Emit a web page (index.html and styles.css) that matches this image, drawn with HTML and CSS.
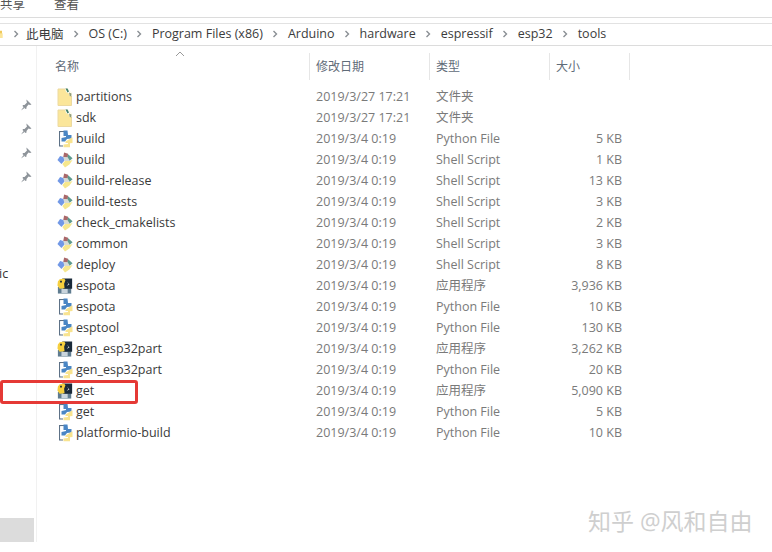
FILE: index.html
```html
<!DOCTYPE html>
<html lang="zh-CN">
<head>
<meta charset="utf-8">
<title>tools</title>
<link rel="stylesheet" href="styles.css">
</head>
<body>
<svg class="defs" width="0" height="0" aria-hidden="true">
  <symbol id="i-folder" viewBox="0 0 16 18">
    <path d="M1 1H10.500L14.500 5V17.500H1Z" fill="#fbe69a" stroke="#ecd9a0" stroke-width="1"/>
    <path d="M8 .5H11L15 4.500V8L12.500 8L12 5.500L9 4Z" fill="#fffdf2"/>
    <path d="M8.500 .5L10.500 .5L12 3.500L10.500 4.500Z" fill="#3f7f6a"/>
    <path d="M12 4.500L14.500 5.500L14.300 8.500L12.700 8Z" fill="#8f9c78"/>
  </symbol>
  <symbol id="i-py" viewBox="0 0 16 18">
    <path d="M2 1H9V2.200H3.200V15.300H6V16.500H2Z" fill="#5d7186"/>
    <path d="M3.200 2.200H9V15.300H3.200Z" fill="#fff"/>
    <path d="M6.500 .5H10.500L11 5H14.500V8.500L10 9L8 11.500L4.500 11.500V8L9 7V6H6.500Z" fill="#4a86c4"/>
    <path d="M15 7.500H15.500V13L13 13.300V17.200H6.500V14.500L11 14V13H8.500V11.500L11 10Z" fill="#f8e38f"/>
  </symbol>
  <symbol id="i-sh" viewBox="0 0 18 18">
    <path d="M8 .5L12.500 2L12 6.500L7 6Z" fill="#a9686a"/>
    <path d="M3.500 4.500L8 6L8.500 9.500L5 13.500L.5 9Z" fill="#7198e6"/>
    <path d="M12.500 2.500L17.500 7L14 10L11.500 6.500Z" fill="#5d9a8e"/>
    <path d="M9.500 9.500L14 10L17.500 9L14 14L9 17.500L6 13.500Z" fill="#f6e78e"/>
    <path d="M7 5.500L12 6L14.500 10L8.500 10Z" fill="#d5dad6"/>
  </symbol>
  <symbol id="i-exe" viewBox="0 0 18 18">
    <path d="M1 10H16V17.500H1Z" fill="#5f7c90"/>
    <path d="M5 12H12V17H5Z" fill="#c9d4dc"/>
    <path d="M6 .5H17V12H7Z" fill="#1a2a3a"/>
    <path d="M11 4L14 7L11 9L13 6.500Z" fill="#f0f0f0"/>
    <path d="M3 1.500L8 .5L9.500 2.500L8 6.500L8.500 11.500L3 12L.5 8.500L1 4Z" fill="#f6cf3e"/>
    <path d="M3.500 3H5.500V5H3.500Z" fill="#1a2a3a"/>
  </symbol>
  <symbol id="i-pin" viewBox="0 0 12 12">
    <path d="M6.500 .5L11.500 5.500L10 6L8.500 5.500L6.500 8L6.500 9.500L5.500 10L2.500 7L3 6L4.500 6L7 3.500L6.500 2Z" fill="#8e949a"/>
    <path d="M3.500 8L1 11.500L4.500 9Z" fill="#8e949a"/>
  </symbol>
  <symbol id="i-chev" viewBox="0 0 6 8">
    <path d="M1.500 1L4.500 4L1.500 7" fill="none" stroke="#8a8f94" stroke-width="1.400"/>
  </symbol>
</svg>

<header class="tabs">
  <span class="tab tab-share">共享</span>
  <span class="tab">查看</span>
</header>

<nav class="crumbs">
  <svg class="crumb-folder" viewBox="0 0 6 14"><path d="M0 2H3V12H0Z" fill="#f0c95a"/><path d="M0 6H4V13H0Z" fill="#fbe59a"/></svg>
  <svg class="chev"><use href="#i-chev"/></svg><span>此电脑</span>
  <svg class="chev"><use href="#i-chev"/></svg><span>OS (C:)</span>
  <svg class="chev"><use href="#i-chev"/></svg><span>Program Files (x86)</span>
  <svg class="chev"><use href="#i-chev"/></svg><span>Arduino</span>
  <svg class="chev"><use href="#i-chev"/></svg><span>hardware</span>
  <svg class="chev"><use href="#i-chev"/></svg><span>espressif</span>
  <svg class="chev"><use href="#i-chev"/></svg><span>esp32</span>
  <svg class="chev"><use href="#i-chev"/></svg><span>tools</span>
</nav>

<main class="main">
  <aside class="side">
    <div class="pins">
      <svg class="pin"><use href="#i-pin"/></svg>
      <svg class="pin"><use href="#i-pin"/></svg>
      <svg class="pin"><use href="#i-pin"/></svg>
      <svg class="pin"><use href="#i-pin"/></svg>
    </div>
    <div class="side-label">ic</div>
    <div class="side-block"></div>
  </aside>

  <section class="list">
    <div class="head">
      <div class="hcell hname">名称<svg class="caret" viewBox="0 0 10 6"><path d="M1 5L5 1L9 5" fill="none" stroke="#9a9a9a" stroke-width="1"/></svg></div>
      <div class="hcell">修改日期</div>
      <div class="hcell">类型</div>
      <div class="hcell">大小</div>
    </div>

    <div class="row"><div class="name"><svg class="ico"><use href="#i-folder"/></svg>partitions</div><div class="cell">2019/3/27 17:21</div><div class="cell">文件夹</div><div class="size"></div></div>
    <div class="row"><div class="name"><svg class="ico"><use href="#i-folder"/></svg>sdk</div><div class="cell">2019/3/27 17:21</div><div class="cell">文件夹</div><div class="size"></div></div>
    <div class="row"><div class="name"><svg class="ico"><use href="#i-py"/></svg>build</div><div class="cell">2019/3/4 0:19</div><div class="cell">Python File</div><div class="size">5 KB</div></div>
    <div class="row"><div class="name"><svg class="ico"><use href="#i-sh"/></svg>build</div><div class="cell">2019/3/4 0:19</div><div class="cell">Shell Script</div><div class="size">1 KB</div></div>
    <div class="row"><div class="name"><svg class="ico"><use href="#i-sh"/></svg>build-release</div><div class="cell">2019/3/4 0:19</div><div class="cell">Shell Script</div><div class="size">13 KB</div></div>
    <div class="row"><div class="name"><svg class="ico"><use href="#i-sh"/></svg>build-tests</div><div class="cell">2019/3/4 0:19</div><div class="cell">Shell Script</div><div class="size">3 KB</div></div>
    <div class="row"><div class="name"><svg class="ico"><use href="#i-sh"/></svg>check_cmakelists</div><div class="cell">2019/3/4 0:19</div><div class="cell">Shell Script</div><div class="size">2 KB</div></div>
    <div class="row"><div class="name"><svg class="ico"><use href="#i-sh"/></svg>common</div><div class="cell">2019/3/4 0:19</div><div class="cell">Shell Script</div><div class="size">3 KB</div></div>
    <div class="row"><div class="name"><svg class="ico"><use href="#i-sh"/></svg>deploy</div><div class="cell">2019/3/4 0:19</div><div class="cell">Shell Script</div><div class="size">8 KB</div></div>
    <div class="row"><div class="name"><svg class="ico"><use href="#i-exe"/></svg>espota</div><div class="cell">2019/3/4 0:19</div><div class="cell">应用程序</div><div class="size">3,936 KB</div></div>
    <div class="row"><div class="name"><svg class="ico"><use href="#i-py"/></svg>espota</div><div class="cell">2019/3/4 0:19</div><div class="cell">Python File</div><div class="size">10 KB</div></div>
    <div class="row"><div class="name"><svg class="ico"><use href="#i-py"/></svg>esptool</div><div class="cell">2019/3/4 0:19</div><div class="cell">Python File</div><div class="size">130 KB</div></div>
    <div class="row"><div class="name"><svg class="ico"><use href="#i-exe"/></svg>gen_esp32part</div><div class="cell">2019/3/4 0:19</div><div class="cell">应用程序</div><div class="size">3,262 KB</div></div>
    <div class="row"><div class="name"><svg class="ico"><use href="#i-py"/></svg>gen_esp32part</div><div class="cell">2019/3/4 0:19</div><div class="cell">Python File</div><div class="size">20 KB</div></div>
    <div class="row"><div class="name"><svg class="ico"><use href="#i-exe"/></svg>get</div><div class="cell">2019/3/4 0:19</div><div class="cell">应用程序</div><div class="size">5,090 KB</div></div>
    <div class="row"><div class="name"><svg class="ico"><use href="#i-py"/></svg>get</div><div class="cell">2019/3/4 0:19</div><div class="cell">Python File</div><div class="size">5 KB</div></div>
    <div class="row"><div class="name"><svg class="ico"><use href="#i-py"/></svg>platformio-build</div><div class="cell">2019/3/4 0:19</div><div class="cell">Python File</div><div class="size">10 KB</div></div>
  </section>
</main>

<div class="highlight"></div>
<div class="watermark">知乎 @风和自由</div>
</body>
</html>
```

FILE: styles.css
```css
* { box-sizing: border-box; }
html, body { margin: 0; padding: 0; }
body {
  position: relative;
  width: 772px;
  height: 552px;
  overflow: hidden;
  background: #fff;
  color: #333;
  font-family: "Open Sans", "Noto Sans CJK SC", sans-serif;
  font-size: 12.5px;
}
.defs { position: absolute; }

.tabs {
  height: 18px;
  display: flex;
  gap: 29px;
  border-bottom: 1px solid #dcdcdc;
  overflow: hidden;
  color: #555;
  line-height: 10px;
}
.tab { display: block; }
.crumbs {
  margin-top: 5px;
  height: 23px;
  display: flex;
  align-items: center;
  padding-bottom: 2px;
  border-top: 1px solid #e2e2e2;
  border-bottom: 1px solid #dcdcdc;
  color: #3c3c3c;
  font-size: 12.5px;
}
.crumb-folder { width: 4px; height: 14px; margin-right: 9px; flex: none; }
.chev { width: 6px; height: 8px; margin-left: 9.500px; margin-right: 9.500px; flex: none; }
.crumb-folder + .chev { margin-left: 0; margin-right: 7px; }

.main { display: flex; height: 506px; }
.side {
  width: 37px;
  flex: none;
  display: flex;
  flex-direction: column;
  padding-top: 53px;
  border-right: 1px solid #f1f1f1;
  height: 496px;
}
.pins { display: flex; flex-direction: column; gap: 12px; padding-left: 20px; }
.pin { width: 12px; height: 12px; display: block; }
.side-label { margin-top: 83px; height: 16px; line-height: 16px; color: #333; margin-left: -1px; }
.side-block { margin-top: auto; width: 34px; height: 24px; background: #dcdcdc; }

.list { flex: 1; min-width: 0; }
.head {
  display: grid;
  grid-template-columns: 273px 120px 120px 80px;
  height: 40px;
  padding-top: 7px;
}
.hcell {
  position: relative;
  height: 27px;
  line-height: 27px;
  padding-left: 6px;
  border-right: 1px solid #e6e6e6;
  color: #5f6b78;
  font-size: 12px;
}
.hname { padding-left: 18px; }
.caret { position: absolute; left: 138px; top: -2px; width: 10px; height: 6px; }

.row {
  display: grid;
  grid-template-columns: 273px 120px 120px 72px;
  height: 21px;
  line-height: 21px;
}
.name { display: flex; align-items: center; padding-left: 20px; color: #3a3a3a; font-size: 12.500px; }
.ico { width: 16px; height: 18px; margin-right: 3px; flex: none; }
.cell { padding-left: 6px; color: #7a7a7a; }
.size { text-align: right; color: #7a7a7a; }

.highlight {
  position: absolute;
  left: 0;
  top: 380px;
  width: 138px;
  height: 24px;
  border: 3px solid #e53935;
  border-radius: 3px;
}
.watermark {
  position: absolute;
  left: 588px;
  top: 507px;
  color: #cfcfcf;
  font-size: 23px;
  line-height: 28px;
  white-space: nowrap;
}
```
